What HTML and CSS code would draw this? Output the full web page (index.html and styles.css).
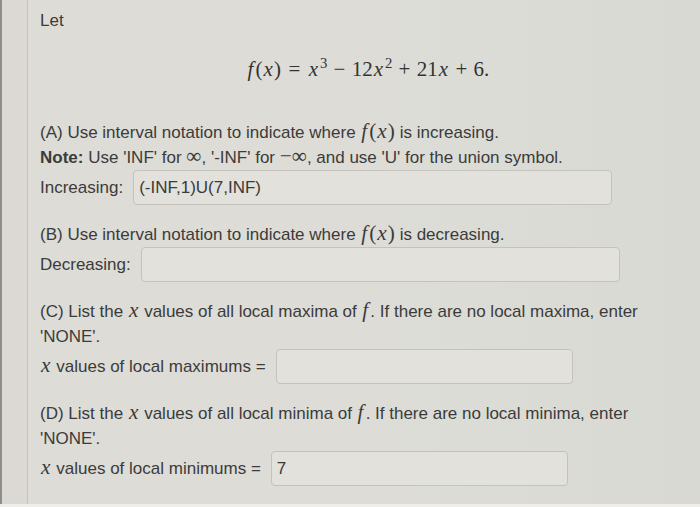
FILE: index.html
```html
<!DOCTYPE html>
<html>
<head>
<meta charset="utf-8">
<link rel="stylesheet" href="styles.css">
</head>
<body>
<div class="page">
  <div class="rail"></div>
  <main class="content">
    <p class="line">Let</p>
    <div class="eq"><span class="mi f">f</span><span class="mo">(</span><span class="mi x">x</span><span class="mo">)</span><span class="rel">=</span><span class="mi x">x</span><sup>3</sup><span class="bin">−</span><span class="mn">12</span><span class="mi x">x</span><sup>2</sup><span class="bin">+</span><span class="mn">21</span><span class="mi x">x</span><span class="bin">+</span><span class="mn">6.</span></div>

    <section class="part first">
      <p class="line">(A) Use interval notation to indicate where <span class="math"><span class="mi f">f</span>(<span class="mi x">x</span>)</span> is increasing.</p>
      <p class="line"><b>Note:</b> Use 'INF' for <span class="math">∞</span>, '-INF' for <span class="math">−∞</span>, and use 'U' for the union symbol.</p>
      <div class="answer"><span class="label">Increasing:</span><div class="box wide">(-INF,1)U(7,INF)</div></div>
    </section>

    <section class="part">
      <p class="line">(B) Use interval notation to indicate where <span class="math"><span class="mi f">f</span>(<span class="mi x">x</span>)</span> is decreasing.</p>
      <div class="answer"><span class="label">Decreasing:</span><div class="box wide"></div></div>
    </section>

    <section class="part">
      <p class="line">(C) List the <span class="math"><span class="mi x">x</span></span> values of all local maxima of <span class="math"><span class="mi f">f</span></span>. If there are no local maxima, enter<br>'NONE'.</p>
      <div class="answer"><span class="label"><span class="math"><span class="mi x">x</span></span> values of local maximums =</span><div class="box narrow"></div></div>
    </section>

    <section class="part">
      <p class="line">(D) List the <span class="math"><span class="mi x">x</span></span> values of all local minima of <span class="math"><span class="mi f">f</span></span>. If there are no local minima, enter<br>'NONE'.</p>
      <div class="answer"><span class="label"><span class="math"><span class="mi x">x</span></span> values of local minimums =</span><div class="box narrow">7</div></div>
    </section>
  </main>
</div>
<div class="bottom"></div>
</body>
</html>
```

FILE: styles.css
```css
html, body {
  margin: 0;
  padding: 0;
}
body {
  width: 700px;
  height: 507px;
  overflow: hidden;
  background: #dcdbd6;
  font-family: "Liberation Sans", Arial, sans-serif;
  font-size: 17px;
  color: #3b3b3b;
  display: flex;
  flex-direction: column;
}
.page {
  flex: 1;
  display: flex;
  min-height: 0;
  background: linear-gradient(90deg, #dddcd7 0%, #dedcd6 40%, #dcdcd6 70%, #d9d9d3 100%);
}
.rail {
  width: 25px;
  flex: none;
  border-left: 2px solid #8d8c89;
  border-right: 1px solid #c6c4bf;
  background: #dcd9d5;
}
.content {
  flex: 1;
  padding: 8px 0 0 12px;
}
.line {
  margin: 0;
  line-height: 25px;
  white-space: nowrap;
}
.math {
  font-family: "Liberation Serif", "DejaVu Serif", serif;
  font-size: 1.25em;
  line-height: 0;
}
.mi {
  font-family: "Liberation Serif", "DejaVu Serif", serif;
  font-style: italic;
}
.mi.f {
  margin: 0 0.1em 0 0.04em;
}
.mi.x {
  margin: 0 0.05em;
}
.eq {
  margin: 24px 0 0 0;
  text-align: center;
  padding-right: 4px;
  line-height: 25px;
  font-family: "Liberation Serif", "DejaVu Serif", serif;
  font-size: 21px;
  color: #333;
}
.eq sup {
  font-size: 0.7em;
  vertical-align: 0.55em;
  line-height: 0;
  margin-left: 0.05em;
}
.rel {
  margin: 0 0.36em;
}
.bin {
  margin: 0 0.3em;
}
.part {
  margin-top: 17px;
}
.part.first {
  margin-top: 38px;
}
.answer {
  display: flex;
  align-items: center;
  gap: 10px;
}
.label {
  white-space: nowrap;
}
.box {
  box-sizing: border-box;
  height: 35px;
  border: 1px solid #c3c2bd;
  border-radius: 4px;
  background: #e2e1dc;
  padding: 0 5px;
  display: flex;
  align-items: center;
  font-size: 17px;
  color: #3a3a3a;
}
.box.wide {
  width: 479px;
}
.box.narrow {
  width: 297px;
}
.bottom {
  height: 3px;
  flex: none;
  background: #efeeea;
}
```
